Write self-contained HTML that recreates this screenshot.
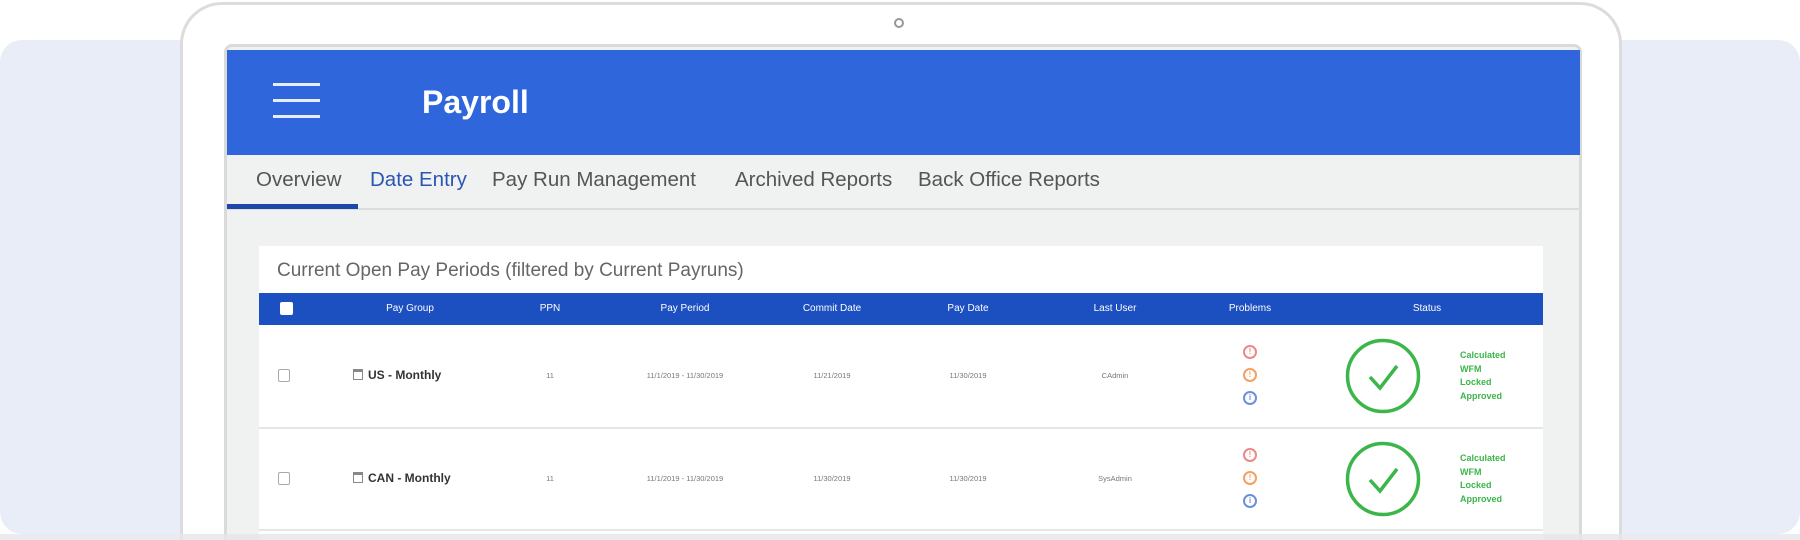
<!DOCTYPE html>
<html><head><meta charset="utf-8"><style>
*{margin:0;padding:0;box-sizing:border-box}
html{width:1800px;height:540px;overflow:hidden}
body{width:1800px;height:540px;overflow:hidden;background:#fff;font-family:"Liberation Sans",sans-serif;position:relative}
.a{position:absolute}
.panel{left:0;top:40px;width:1800px;height:494px;background:#e9edf8;border-radius:22px}
.laptop{left:180px;top:2px;width:1442px;height:538px;background:#fff;border:3px solid #dcdcdc;border-bottom:none;border-radius:42px 42px 0 0}
.cam{left:894px;top:18px;width:10px;height:10px;border:2px solid #999;border-radius:50%}
.screen{left:224px;top:44px;width:1358px;height:496px;background:#f0f1f1;border:3px solid #dadada;border-bottom:none;border-radius:8px 8px 0 0;overflow:hidden}
.hdr{left:227px;top:50px;width:1353px;height:105px;background:#2f66db}
.ham{left:273px;width:47px;height:3px;background:#e6ecfb}
.tab{top:168px;font-size:20.5px;color:#555}
.th{top:303px;font-size:10px;color:#fff;transform:translateX(-50%)}
.cell{font-size:7.5px;color:#777;transform:translateX(-50%)}
.pi{width:14px;height:14px;border-radius:50%;border:2px solid;font-size:8px;text-align:center;line-height:10px;font-weight:bold}
.gt{font-size:9px;color:#3cb54a;font-weight:bold;line-height:13.5px}
.rt{font-size:12px;font-weight:bold;color:#333}
</style></head><body>
<div class="a panel"></div>
<div class="a laptop"></div>
<div class="a cam"></div>
<div class="a screen"></div>
<div class="a hdr"></div>
<div class="a ham" style="top:83px"></div>
<div class="a ham" style="top:99px"></div>
<div class="a ham" style="top:115px"></div>
<div class="a" style="left:422px;top:84px;font-size:32px;font-weight:bold;color:#fff">Payroll</div>
<div class="a" style="left:227px;top:208px;width:1353px;height:2px;background:#dcdcdc"></div>
<div class="a" style="left:227px;top:204px;width:131px;height:5px;background:#1d47a8"></div>
<div class="a tab" style="left:256px">Overview</div>
<div class="a tab" style="left:370px;color:#2a55b5">Date Entry</div>
<div class="a tab" style="left:492px">Pay Run Management</div>
<div class="a tab" style="left:735px">Archived Reports</div>
<div class="a tab" style="left:918px">Back Office Reports</div>
<div class="a" style="left:259px;top:246px;width:1284px;height:294px;background:#fff"></div>
<div class="a" style="left:277px;top:260px;font-size:19px;color:#666">Current Open Pay Periods (filtered by Current Payruns)</div>
<div class="a" style="left:259px;top:293px;width:1284px;height:32px;background:#1c4fbf"></div>
<div class="a" style="left:280px;top:302px;width:13px;height:13px;background:#fff;border-radius:2px"></div>
<div class="a th" style="left:410px">Pay Group</div>
<div class="a th" style="left:550px">PPN</div>
<div class="a th" style="left:685px">Pay Period</div>
<div class="a th" style="left:832px">Commit Date</div>
<div class="a th" style="left:968px">Pay Date</div>
<div class="a th" style="left:1115px">Last User</div>
<div class="a th" style="left:1250px">Problems</div>
<div class="a th" style="left:1427px">Status</div>
<div class="a" style="left:259px;top:427px;width:1284px;height:2px;background:#e6e6e6"></div>
<div class="a" style="left:259px;top:529px;width:1284px;height:2px;background:#e6e6e6"></div>

<div class="a" style="left:278px;top:369px;width:12px;height:13px;border:1.5px solid #aaa;border-radius:2px"></div>
<div class="a" style="left:353px;top:369px;width:10px;height:11px;border:1.5px solid #888;border-top-width:3px"></div>
<div class="a rt" style="left:368px;top:368px">US - Monthly</div>
<div class="a cell" style="left:550px;top:371px">11</div>
<div class="a cell" style="left:685px;top:371px">11/1/2019 - 11/30/2019</div>
<div class="a cell" style="left:832px;top:371px">11/21/2019</div>
<div class="a cell" style="left:968px;top:371px">11/30/2019</div>
<div class="a cell" style="left:1115px;top:371px">CAdmin</div>
<div class="a pi" style="left:1243px;top:345px;border-color:#e88;color:#e88">!</div>
<div class="a pi" style="left:1243px;top:368px;border-color:#f5a060;color:#f5a060">!</div>
<div class="a pi" style="left:1243px;top:391px;border-color:#6a8fe0;color:#6a8fe0">i</div>
<svg class="a" style="left:1344px;top:337px" width="78" height="78"><circle cx="39" cy="39" r="35.5" fill="none" stroke="#3cb54a" stroke-width="3.5"/><path d="M26 40 L36 51 L53 29" fill="none" stroke="#3cb54a" stroke-width="3.5"/></svg>
<div class="a gt" style="left:1460px;top:349px">Calculated<br>WFM<br>Locked<br>Approved</div>

<div class="a" style="left:278px;top:472px;width:12px;height:13px;border:1.5px solid #aaa;border-radius:2px"></div>
<div class="a" style="left:353px;top:472px;width:10px;height:11px;border:1.5px solid #888;border-top-width:3px"></div>
<div class="a rt" style="left:368px;top:471px">CAN - Monthly</div>
<div class="a cell" style="left:550px;top:474px">11</div>
<div class="a cell" style="left:685px;top:474px">11/1/2019 - 11/30/2019</div>
<div class="a cell" style="left:832px;top:474px">11/30/2019</div>
<div class="a cell" style="left:968px;top:474px">11/30/2019</div>
<div class="a cell" style="left:1115px;top:474px">SysAdmin</div>
<div class="a pi" style="left:1243px;top:448px;border-color:#e88;color:#e88">!</div>
<div class="a pi" style="left:1243px;top:471px;border-color:#f5a060;color:#f5a060">!</div>
<div class="a pi" style="left:1243px;top:494px;border-color:#6a8fe0;color:#6a8fe0">i</div>
<svg class="a" style="left:1344px;top:440px" width="78" height="78"><circle cx="39" cy="39" r="35.5" fill="none" stroke="#3cb54a" stroke-width="3.5"/><path d="M26 40 L36 51 L53 29" fill="none" stroke="#3cb54a" stroke-width="3.5"/></svg>
<div class="a gt" style="left:1460px;top:452px">Calculated<br>WFM<br>Locked<br>Approved</div>
<div class="a" style="left:0;top:534px;width:1800px;height:6px;background:#e4e6eb;opacity:.8"></div>
</body></html>
